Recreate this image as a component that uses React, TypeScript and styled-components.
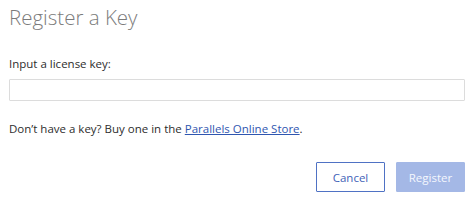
import React from 'react'
import styled, { createGlobalStyle } from 'styled-components'

const Global = createGlobalStyle`
  html, body { margin: 0; padding: 0; background: #fff; }
  body { font-family: 'Open Sans', 'Noto Sans', sans-serif; }
`

const Dialog = styled.div`
  width: 474px;
  height: 200px;
  box-sizing: border-box;
  padding: 0 9px;
  display: flex;
  flex-direction: column;
`

const Title = styled.h1`
  margin: 3px 0 0;
  font-size: 20.5px;
  font-weight: 300;
  line-height: 28px;
  color: #7b7b7b;
`

const Label = styled.label`
  margin-top: 24px;
  font-size: 11.5px;
  line-height: 17px;
  color: #2d2d2d;
`

const Input = styled.input`
  margin-top: 7px;
  height: 22px;
  box-sizing: border-box;
  border: 1px solid #dcdcdc;
  border-radius: 1px;
  outline: none;
  font: inherit;
  font-size: 11.5px;
  padding: 0 6px;
`

const Note = styled.p`
  margin: 19px 0 0;
  font-size: 11.5px;
  line-height: 17px;
  color: #2d2d2d;
`

const Link = styled.a`
  color: #2f56b0;
  text-decoration: underline;
`

const Actions = styled.div`
  margin-top: 25px;
  display: flex;
  justify-content: flex-end;
  gap: 11px;
`

const Button = styled.button<{ $primary?: boolean }>`
  width: 69px;
  height: 30px;
  box-sizing: border-box;
  border-radius: 1px;
  font-family: inherit;
  font-size: 11.5px;
  padding: 0;
  border: 1px solid ${p => (p.$primary ? '#a4b8e6' : '#4f72c4')};
  background: ${p => (p.$primary ? '#a4b8e6' : '#fff')};
  color: ${p => (p.$primary ? '#f4f7fd' : '#3f63b8')};
`

export default function App() {
  return (
    <>
      <Global />
      <Dialog>
        <Title>Register a Key</Title>
        <Label htmlFor="key">Input a license key:</Label>
        <Input id="key" />
        <Note>
          Don’t have a key? Buy one in the <Link href="#">Parallels Online Store</Link>.
        </Note>
        <Actions>
          <Button>Cancel</Button>
          <Button $primary disabled>Register</Button>
        </Actions>
      </Dialog>
    </>
  )
}
